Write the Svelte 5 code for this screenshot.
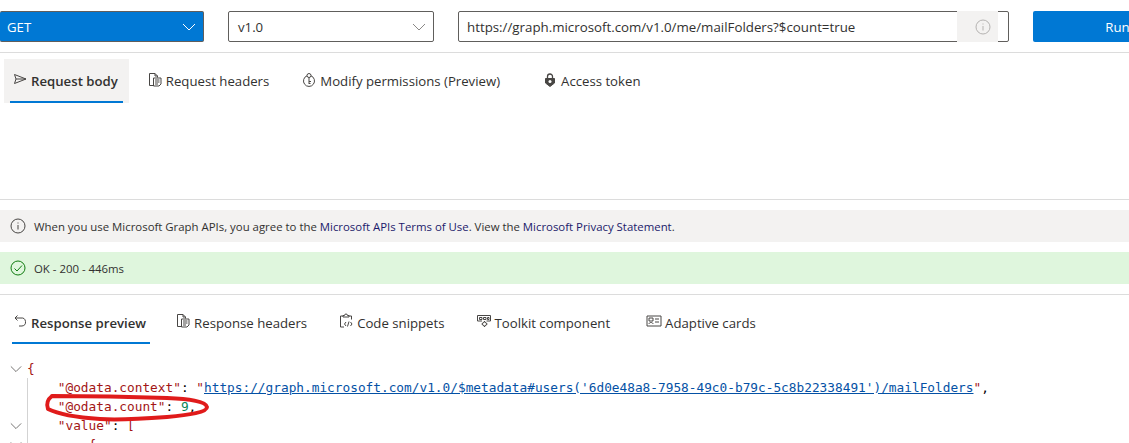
<script>
	const requestTabs = [
		{ id: 'send', label: 'Request body', active: true },
		{ id: 'doc', label: 'Request headers' },
		{ id: 'perm', label: 'Modify permissions (Preview)' },
		{ id: 'lock', label: 'Access token' }
	];
	const responseTabs = [
		{ id: 'undo', label: 'Response preview', active: true },
		{ id: 'doc', label: 'Response headers' },
		{ id: 'clip', label: 'Code snippets' },
		{ id: 'kit', label: 'Toolkit component' },
		{ id: 'card', label: 'Adaptive cards' }
	];
</script>

{#snippet icon(id)}
	<svg class="icon" width="16" height="16" viewBox="0 0 16 16" fill="none" stroke="currentColor" stroke-width="1">
		{#if id === 'send'}
			<path d="M2.500 2.500 14 7 2.500 11.500 4 7ZM4 7h10" />
		{:else if id === 'doc'}
			<path d="M6.500 13.500H2.500v-12H8l2.500 2.500v1.500M8 1.500V4h2.500" />
			<path d="M6.500 6h7.500v6l-2 2H6.500ZM8 8h4.500M8 10h4.500M8 12h3" />
		{:else if id === 'perm'}
			<path d="M6 3.800a5.500 5.500 0 1 0 4 0" />
			<circle cx="8" cy="3.500" r="2" />
			<path d="M8 5.500v6.500M8 9.500h2M8 11.500h1.500" />
		{:else if id === 'lock'}
			<path d="M5.500 6.500V4.500a2.500 2.500 0 0 1 5 0v2" stroke-width="1.300" />
			<path d="M3.500 6.500h9v4.500L8 14.500 3.500 11Z" fill="currentColor" />
			<circle cx="8" cy="9.500" r="1.500" fill="#fff" stroke="none" />
		{:else if id === 'undo'}
			<path d="M5.500 2.500 3 5l2.500 2.500M3 5h6a4 4 0 0 1 1 8H7" />
		{:else if id === 'clip'}
			<path d="M6 14H2.500V3H5M11 3h2.500v3.500M5 4V2.500h1.500a1.500 1.500 0 0 1 3 0H11V4Z" />
			<path d="M8 9l-1.500 2L8 13M12.500 9l1.500 2-1.500 2M11 8.500l-1.500 5" />
		{:else if id === 'kit'}
			<path d="M6 8H1.500V2.500h13V8h-4" />
			<path d="M3.500 4.500h2.500V6.500H3.500ZM7.500 4.500H10V6.500H7.500ZM11.500 4.500H13V6.500H11.500Z" />
			<circle cx="8.500" cy="11" r="2" />
			<path d="M8.500 8v1M8.500 13v1M5.500 11h1M10.500 11h1" />
		{:else if id === 'card'}
			<path d="M1 3h14v10H1Z" />
			<path d="M3 5h4v3H3ZM3 11c0-2 4-2 4 0M9 6h4M9 9h4" />
		{/if}
	</svg>
{/snippet}

{#snippet chevron(cls)}
	<svg class={cls} width="14" height="8" viewBox="0 0 14 8" fill="none" stroke="currentColor" stroke-width="1">
		<path d="M1 1l6 6 6-6" />
	</svg>
{/snippet}

<div class="page">
	<div class="query-bar">
		<div class="select method">
			<span>GET</span>
			{@render chevron('chev')}
		</div>
		<div class="select version">
			<span>v1.0</span>
			{@render chevron('chev')}
		</div>
		<div class="url">
			<span class="url-text">https://graph.microsoft.com/v1.0/me/mailFolders?$count=true</span>
			<span class="url-info">
				<svg width="16" height="16" viewBox="0 0 16 16" fill="none" stroke="#b5b3b1">
					<circle cx="8" cy="8" r="7" />
					<path d="M8 7v4.500M8 4.500v1" />
				</svg>
			</span>
		</div>
		<button class="run">Run query</button>
	</div>

	<div class="tabs request-tabs">
		{#each requestTabs as tab}
			<div class="tab" class:active={tab.active}>
				{@render icon(tab.id)}
				<span>{tab.label}</span>
			</div>
		{/each}
	</div>

	<div class="notice">
		<svg width="16" height="16" viewBox="0 0 16 16" fill="none" stroke="#484644">
			<circle cx="8" cy="8" r="7" />
			<path d="M8 7v4.500M8 4.500v1" />
		</svg>
		<span>When you use Microsoft Graph APIs, you agree to the <a href="#terms">Microsoft APIs Terms of Use</a>. View the <a href="#privacy">Microsoft Privacy Statement</a>.</span>
	</div>

	<div class="status">
		<svg width="16" height="16" viewBox="0 0 16 16" fill="none" stroke="#107c10">
			<circle cx="8" cy="8" r="7" />
			<path d="M4.500 8.500l2.500 2.500 5-5.500" />
		</svg>
		<span>OK - 200 - 446ms</span>
	</div>

	<div class="tabs response-tabs">
		{#each responseTabs as tab}
			<div class="tab" class:active={tab.active}>
				{@render icon(tab.id)}
				<span>{tab.label}</span>
			</div>
		{/each}
	</div>

	<div class="code">
		<div class="gutter">
			<div class="fold">{@render chevron('fold-chev')}</div>
			<div class="fold"></div>
			<div class="fold"></div>
			<div class="fold">{@render chevron('fold-chev')}</div>
			<div class="fold">{@render chevron('fold-chev')}</div>
		</div>
		<pre class="json"><span class="br">{'{'}</span>
    <span class="key">"@odata.context"</span>: <span class="key">"</span><a href="#ctx">https://graph.microsoft.com/v1.0/$metadata#users('6d0e48a8-7958-49c0-b79c-5c8b22338491')/mailFolders</a><span class="key">"</span>,
    <span class="key">"@odata.count"</span>: <span class="num">9</span>,
    <span class="key">"value"</span>: <span class="br">[</span>
        <span class="br">{'{'}</span></pre>
		<div class="guide"></div>
		<svg class="scribble" width="170" height="32" viewBox="44 392 170 32" fill="none" stroke="#e01b1b" stroke-width="4" stroke-linecap="round" stroke-linejoin="round">
			<path d="M52 396C70 396 110 396 167 398C188 399 206 401 207 407C207 412 190 415 167 417C140 419 115 420 100 419C85 418 60 415 48 409C46 404 48 399 52 396" />
		</svg>
	</div>
</div>

<style>
	:global(body) {
		margin: 0;
		background: #fff;
		overflow: hidden;
	}

	.page {
		width: 1129px;
		height: 443px;
		overflow: hidden;
		font-family: 'Open Sans', 'Noto Sans', sans-serif;
		font-size: 13.200px;
		color: #323130;
	}

	.query-bar {
		display: flex;
		align-items: stretch;
		box-sizing: border-box;
		height: 53px;
		padding: 11px 0 10px;
		border-bottom: 1px solid #dcdcdc;
	}

	.query-bar > * {
		flex-shrink: 0;
	}

	.select {
		display: flex;
		align-items: center;
		justify-content: space-between;
		box-sizing: border-box;
		padding: 0 7px 0 7px;
		border-radius: 2px;
	}

	.method {
		width: 204px;
		background: #0078d4;
		color: #fff;
		border: 1px solid #605e5c;
		border-left: 0;
	}

	.version {
		width: 206px;
		margin-left: 24px;
		padding-left: 9px;
		border: 1px solid #605e5c;
	}

	.version .chev {
		color: #8a8886;
	}

	.fold-chev {
		color: #605e5c;
		width: 12px;
	}

	.url {
		display: flex;
		align-items: stretch;
		justify-content: space-between;
		box-sizing: border-box;
		width: 551px;
		margin-left: 24px;
		padding-left: 8px;
		border: 1px solid #605e5c;
		border-radius: 2px;
	}

	.url-text {
		align-self: center;
		font-size: 13.300px;
	}

	.url-info {
		display: flex;
		align-items: center;
		justify-content: center;
		box-sizing: border-box;
		width: 41px;
		margin: -1px 10px -1px 0;
		padding-left: 10px;
		background: #f3f2f1;
	}

	.run {
		width: 208px;
		margin-left: 24px;
		border: 0;
		border-radius: 2px;
		background: #0078d4;
		color: #fff;
		font: inherit;
	}

	.tabs {
		display: flex;
		align-items: stretch;
	}

	.tab {
		display: flex;
		align-items: center;
		gap: 3px;
		box-sizing: border-box;
		position: relative;
		height: 44px;
		padding: 0 8px;
		white-space: nowrap;
	}

	.tab .icon {
		flex-shrink: 0;
		margin-top: -3px;
		color: #484644;
	}

	.tab.active {
		font-weight: 600;
	}

	.tab.active::after {
		content: '';
		position: absolute;
		left: 6px;
		right: 6px;
		bottom: 0;
		height: 2px;
		background: #0078d4;
	}

	.request-tabs {
		box-sizing: border-box;
		height: 147px;
		padding: 6px 0 0 4px;
		align-items: flex-start;
		border-bottom: 1px solid #dcdcdc;
	}

	.request-tabs .tab.active {
		background: #f3f2f1;
		padding-right: 11px;
	}

	.request-tabs .tab:nth-child(2) {
		margin-left: 10px;
	}

	.request-tabs .tab:nth-child(3) {
		margin-left: 16px;
	}

	.request-tabs .tab:nth-child(4) {
		margin-left: 26px;
	}

	.notice,
	.status {
		display: flex;
		align-items: center;
		gap: 8px;
		box-sizing: border-box;
		height: 32px;
		padding-left: 10px;
		font-size: 11.400px;
	}

	.notice {
		margin-top: 10px;
		background: #f3f2f1;
	}

	.notice a {
		color: #1b1a6b;
		text-decoration: none;
	}

	.status {
		margin-top: 10px;
		margin-bottom: 10px;
		background: #dff6dd;
	}

	.response-tabs {
		box-sizing: border-box;
		height: 51px;
		padding: 6px 0 0 4px;
		border-top: 1px solid #dcdcdc;
	}

	.response-tabs .tab {
		height: 43px;
		margin-left: 15px;
	}

	.response-tabs .tab:first-child {
		margin-left: 0;
	}

	.response-tabs .tab:nth-child(2) {
		margin-left: 13px;
	}

	.response-tabs .tab:last-child {
		margin-left: 20px;
	}

	.response-tabs .tab.active::after {
		left: 8px;
		right: 4px;
	}

	.code {
		position: relative;
		display: flex;
		padding-top: 14px;
	}

	.gutter {
		width: 27px;
		flex-shrink: 0;
	}

	.fold {
		display: flex;
		align-items: center;
		justify-content: center;
		height: 19px;
		padding-left: 5px;
		box-sizing: border-box;
	}

	.guide {
		position: absolute;
		left: 27px;
		top: 33px;
		bottom: 0;
		width: 1px;
		background: #d3d3d3;
	}

	.json {
		margin: 0;
		font-family: 'DejaVu Sans Mono', 'Liberation Mono', monospace;
		font-size: 12.790px;
		line-height: 19px;
		color: #000;
	}

	.key,
	.br {
		color: #a31515;
	}

	.num {
		color: #098658;
	}

	.json a {
		color: #0451a5;
		text-decoration: underline;
	}

	.scribble {
		position: absolute;
		left: 44px;
		top: 47px;
	}
</style>
